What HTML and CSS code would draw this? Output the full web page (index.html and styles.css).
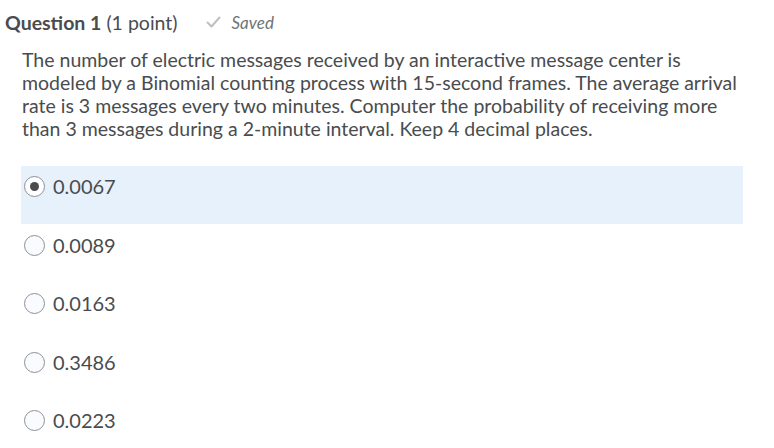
FILE: index.html
```html
<!DOCTYPE html>
<html>
<head>
<meta charset="utf-8">
<link rel="stylesheet" href="styles.css">
</head>
<body>
<div class="page">
  <div class="q-head">
    <span class="q-title"><strong>Question 1</strong> (1 point)</span>
    <span class="saved">
      <svg class="check" width="15" height="12" viewBox="0 0 15 12"><path d="M1.5 6.5 L5.5 10.5 L13.5 1.5" fill="none" stroke="#bdbfc1" stroke-width="2" stroke-linecap="round" stroke-linejoin="round"/></svg>
      <em>Saved</em>
    </span>
  </div>
  <div class="q-body">
    <p class="q-text">The number of electric messages received by an interactive message center is modeled by a Binomial counting process with 15-second frames. The average arrival rate is 3 messages every two minutes. Computer the probability of receiving more than 3 messages during a 2-minute interval. Keep 4 decimal places.</p>
    <div class="options">
      <label class="opt selected"><span class="radio checked"></span><span class="val">0.0067</span></label>
      <label class="opt"><span class="radio"></span><span class="val">0.0089</span></label>
      <label class="opt"><span class="radio"></span><span class="val">0.0163</span></label>
      <label class="opt"><span class="radio"></span><span class="val">0.3486</span></label>
      <label class="opt"><span class="radio"></span><span class="val">0.0223</span></label>
    </div>
  </div>
</div>
</body>
</html>
```
FILE: styles.css
```css
html, body {
  margin: 0;
  padding: 0;
  background: #fff;
}
body {
  font-family: Lato, "Noto Sans", sans-serif;
  color: #494c4e;
}
.page {
  width: 774px;
}
.q-head {
  display: flex;
  align-items: center;
  height: 44px;
  padding-left: 5px;
  gap: 28px;
}
.q-title {
  font-size: 19.5px;
}
.q-title strong {
  font-weight: 700;
}
.saved {
  display: flex;
  align-items: center;
  gap: 11px;
  color: #6e7376;
  font-size: 17px;
}
.check {
  display: block;
}
.q-body {
  padding-left: 21px;
  width: 722px;
}
.q-text {
  margin: 4px 0 0 1px;
  font-size: 19.5px;
  line-height: 23px;
}
.options {
  margin-top: 26px;
  display: flex;
  flex-direction: column;
}
.opt {
  display: flex;
  align-items: flex-start;
  height: 58.5px;
  padding: 10px 0 0 3px;
  box-sizing: border-box;
  font-size: 20px;
}
.opt.selected {
  background: #e6f1fb;
  height: 58px;
  margin-bottom: 0.5px;
}
.radio {
  width: 21px;
  height: 21px;
  box-sizing: border-box;
  border: 1px solid #8d9194;
  border-radius: 50%;
  background: #f9fbff;
  margin-right: 8px;
  position: relative;
  flex: none;
}
.radio.checked {
  background: #fff;
}
.radio.checked::after {
  content: "";
  position: absolute;
  left: 5px;
  top: 5px;
  width: 9px;
  height: 9px;
  border-radius: 50%;
  background: #494c4e;
}
.val {
  line-height: 21px;
}
```
